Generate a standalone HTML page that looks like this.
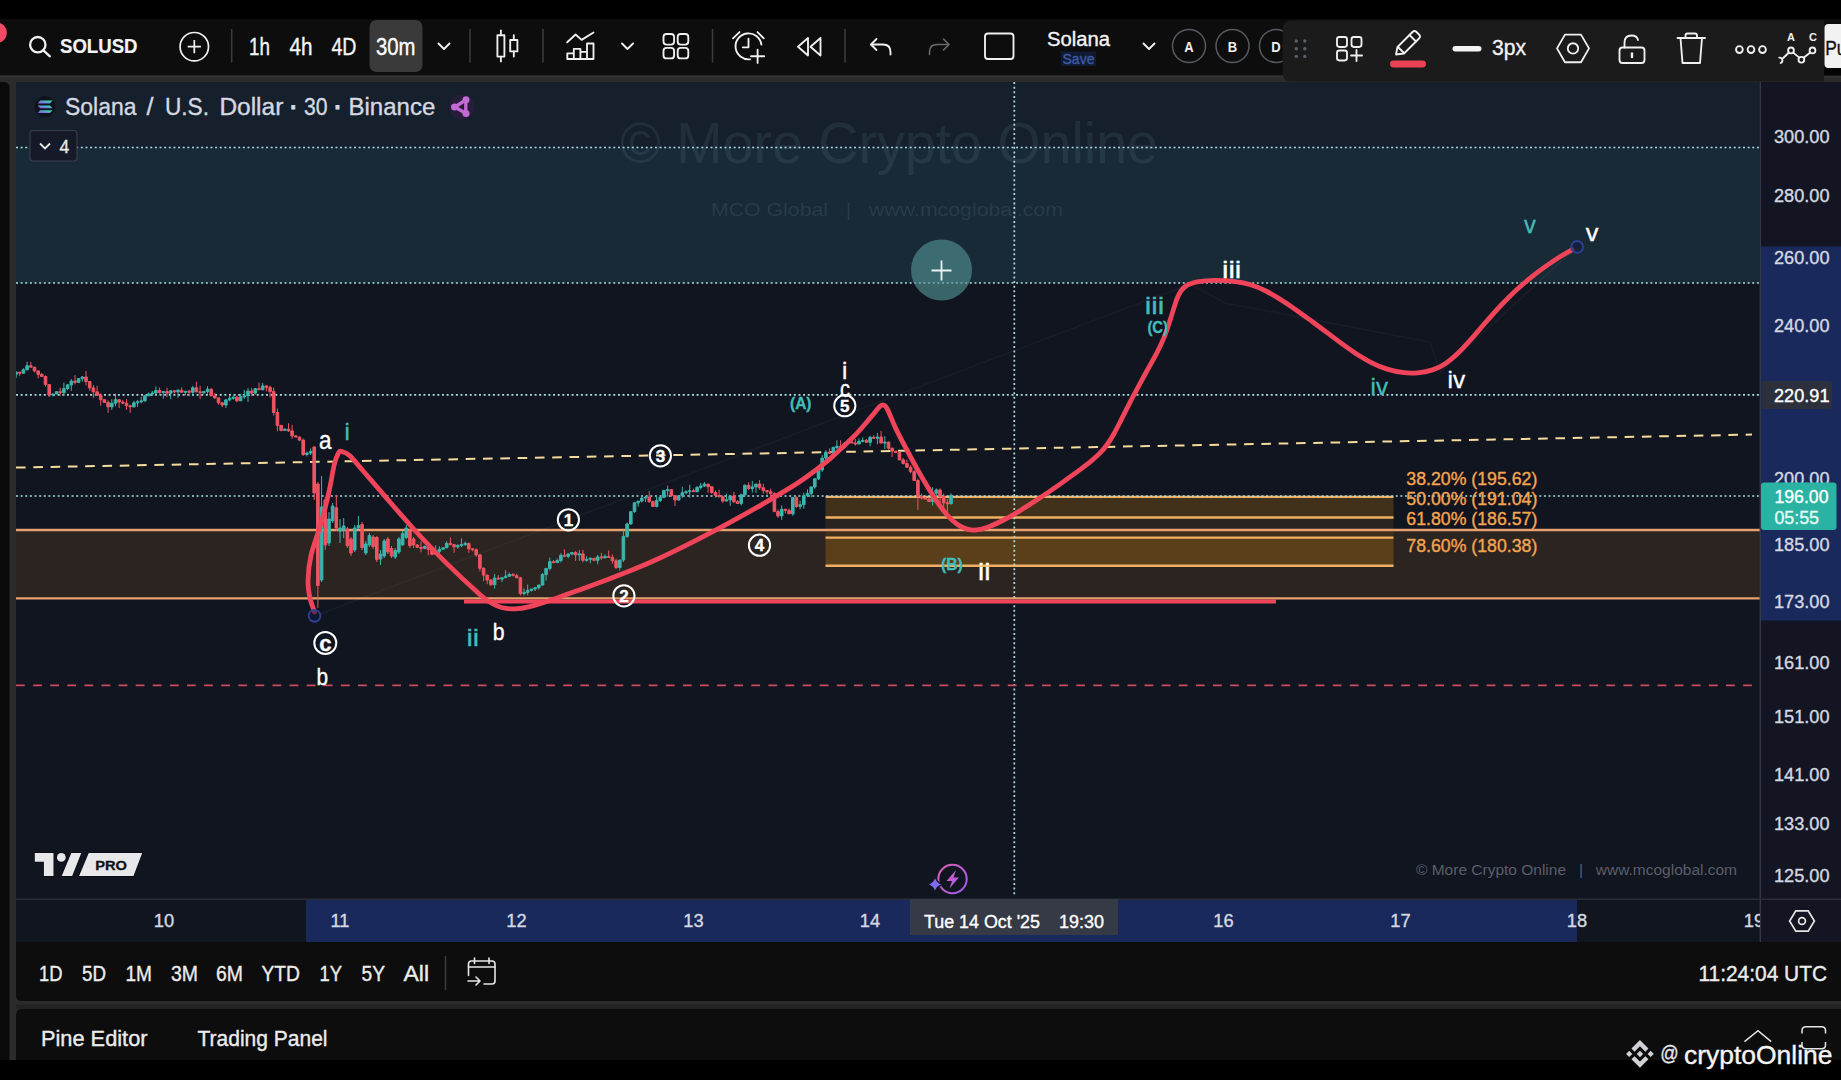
<!DOCTYPE html>
<html lang="en"><head><meta charset="utf-8"><title>SOLUSD 196.00 - Solana chart</title>
<style>
html,body{margin:0;padding:0;background:#000;}
body{width:1841px;height:1080px;overflow:hidden;position:relative;font-family:"Liberation Sans", "DejaVu Sans", sans-serif;}
#app{position:absolute;left:0;top:0;width:1841px;height:1080px;overflow:hidden;background:#000;}
.layer{position:absolute;left:0;top:0;width:1841px;height:1080px;pointer-events:none;}
svg{position:absolute;left:0;top:0;display:block;}
svg text{font-family:"Liberation Sans", "DejaVu Sans", sans-serif;white-space:pre;}
</style></head><body><div id="app">
<div id="frame" class="layer"><svg width="1841" height="1080" viewBox="0 0 1841 1080">
<defs>
<clipPath id="cpChart"><rect x="16" y="82" width="1744" height="817"/></clipPath>
<clipPath id="cpTime"><rect x="16" y="899" width="1744" height="43"/></clipPath>
<linearGradient id="gSol" x1="0" y1="1" x2="1" y2="0"><stop offset="0" stop-color="#9945ff"/><stop offset="1" stop-color="#19fb9b"/></linearGradient>
<linearGradient id="gBolt" x1="0" y1="0" x2="1" y2="1"><stop offset="0" stop-color="#e05fb0"/><stop offset="1" stop-color="#9a5cf0"/></linearGradient>
</defs>

<rect x="0" y="19" width="1841" height="57" fill="#0d0d0d"/>
<rect x="0" y="75.5" width="1841" height="1005" fill="#2b2b2b"/>
<path d="M0 82H4Q9.5 82 9.5 88V1061H0z" fill="#0a0a0a"/>
<rect x="0" y="1060" width="1841" height="20" fill="#000"/>
<path d="M22 82H1841V942H16V88Q16 82 22 82z" fill="#11151f"/>
<path d="M16 942H1841V1001H22Q16 1001 16 995z" fill="#0d0d0d"/>
<path d="M22 1009H1841V1060H16V1015Q16 1009 22 1009z" fill="#0d0d0d"/>
<rect x="16" y="1004.5" width="1841" height="4.5" fill="#232323"/>
<rect x="0" y="75.5" width="1841" height="2" fill="#333333"/>
</svg></div>
<main id="chart-pane" class="layer" aria-label="chart pane"><svg width="1841" height="1080" viewBox="0 0 1841 1080">
<g clip-path="url(#cpChart)">
<rect x="16" y="82" width="1743.5" height="66" fill="#15202c"/>
<rect x="16" y="148" width="1743.5" height="135" fill="#192a37"/>
<text x="620.0" y="162.8" font-size="57" fill="rgba(150,190,205,0.10)" textLength="538.0" lengthAdjust="spacingAndGlyphs">© More Crypto Online</text>
<text x="711.0" y="216.0" font-size="19" fill="rgba(150,190,205,0.13)" textLength="352.0" lengthAdjust="spacingAndGlyphs">MCO Global   |   www.mcoglobal.com</text>
<rect x="16" y="530" width="1744" height="68.3" fill="#2c2420"/>
<rect x="825.5" y="496.7" width="568" height="20.8" fill="#42311a"/>
<rect x="825.5" y="517.5" width="568" height="12.5" fill="#2a2421"/>
<rect x="825.5" y="530" width="568" height="7.7" fill="#3e2e1a"/>
<rect x="825.5" y="537.7" width="568" height="28" fill="#5b3f1a"/>
<line x1="825.5" x2="1393.5" y1="496.9" y2="496.9" stroke="#f0b062" stroke-width="2.4"/>
<line x1="825.5" x2="1393.5" y1="517.5" y2="517.5" stroke="#f0b062" stroke-width="2.4"/>
<line x1="825.5" x2="1393.5" y1="537.6" y2="537.6" stroke="#f0b062" stroke-width="2.4"/>
<line x1="825.5" x2="1393.5" y1="565.8" y2="565.8" stroke="#f0b062" stroke-width="2.4"/>
<line x1="16" x2="1760" y1="530" y2="530" stroke="#e6a06e" stroke-width="2.3"/>
<line x1="16" x2="1760" y1="598.3" y2="598.3" stroke="#e6a06e" stroke-width="2.3"/>
<line x1="16" x2="1759" y1="147.5" y2="147.5" stroke="#a9dbe0" stroke-width="1.7" stroke-dasharray="2 2.63"/>
<line x1="16" x2="1759" y1="283" y2="283" stroke="#a9dbe0" stroke-width="1.7" stroke-dasharray="2 2.63"/>
<line x1="16" x2="1759" y1="394.8" y2="394.8" stroke="#a9dbe0" stroke-width="1.7" stroke-dasharray="2 2.63"/>
<line x1="16" x2="1759" y1="496" y2="496" stroke="#a9dbe0" stroke-width="1.7" stroke-dasharray="2 2.63"/>
<line x1="1014.3" x2="1014.3" y1="82" y2="896" stroke="#a9dbe0" stroke-width="1.7" stroke-dasharray="2 2.63"/>
<line x1="16" y1="467.6" x2="1752" y2="434.6" stroke="#f5dc9c" stroke-width="2" stroke-dasharray="9.6 7.7"/>
<line x1="16" y1="685.3" x2="1752" y2="685.3" stroke="#cc4a62" stroke-width="1.7" stroke-dasharray="8.8 8.3"/>
<polyline points="315,616 1190,284 1225,303 1430,342 1440,372 1577,247" fill="none" stroke="#ffffff" stroke-opacity="0.03" stroke-width="2"/>
<path d="M16.1 371.2V378.2M14.8 372.2h2.6V374.2h-2.6zM23.4 368.3V373.2M22.1 369.8h2.6V373.2h-2.6zM27.1 361.8V370.3M25.8 365.8h2.6V369.8h-2.6zM52.9 393.5V396.5M51.6 394.0h2.6V395.0h-2.6zM56.6 391.2V394.0M55.3 391.7h2.6V394.0h-2.6zM63.9 382.6V395.7M62.6 388.6h2.6V392.7h-2.6zM67.6 383.9V390.1M66.3 384.9h2.6V388.6h-2.6zM71.3 379.1V390.9M70.0 381.1h2.6V384.9h-2.6zM78.6 378.1V382.9M77.3 378.6h2.6V382.4h-2.6zM82.3 376.0V381.6M81.0 377.0h2.6V378.6h-2.6zM111.8 399.2V409.9M110.5 403.2h2.6V406.9h-2.6zM115.5 393.7V406.2M114.2 399.7h2.6V403.2h-2.6zM133.9 400.8V407.8M132.6 402.8h2.6V406.8h-2.6zM137.5 399.8V406.8M136.2 401.8h2.6V402.8h-2.6zM141.2 396.8V403.3M139.9 400.8h2.6V401.8h-2.6zM144.9 394.8V401.8M143.6 395.8h2.6V400.8h-2.6zM148.6 392.5V395.8M147.3 394.0h2.6V395.8h-2.6zM152.3 391.0V396.0M151.0 393.0h2.6V394.0h-2.6zM155.9 386.5V396.0M154.6 390.5h2.6V393.0h-2.6zM163.3 391.6V398.6M162.0 391.6h2.6V392.6h-2.6zM170.7 390.3V399.2M169.4 390.8h2.6V393.2h-2.6zM178.0 388.8V397.9M176.7 390.3h2.6V391.9h-2.6zM185.4 390.8V395.3M184.1 391.3h2.6V392.3h-2.6zM192.8 385.8V395.3M191.5 387.8h2.6V392.3h-2.6zM203.8 391.1V393.8M202.5 391.6h2.6V392.8h-2.6zM207.5 386.2V393.6M206.2 389.2h2.6V391.6h-2.6zM225.9 398.9V408.0M224.6 399.9h2.6V405.0h-2.6zM229.6 395.2V401.4M228.3 398.2h2.6V399.9h-2.6zM233.3 395.7V399.7M232.0 397.2h2.6V398.2h-2.6zM240.6 393.8V400.8M239.3 396.8h2.6V400.8h-2.6zM244.3 389.8V398.8M243.0 395.8h2.6V396.8h-2.6zM248.0 388.1V401.8M246.7 391.1h2.6V395.8h-2.6zM255.3 388.2V394.6M254.0 388.7h2.6V393.1h-2.6zM262.7 382.9V390.2M261.4 385.9h2.6V389.7h-2.6zM284.8 428.3V430.4M283.5 429.3h2.6V430.4h-2.6zM306.9 451.5V456.5M305.6 453.0h2.6V454.5h-2.6zM310.6 448.5V455.0M309.3 451.5h2.6V453.0h-2.6zM321.6 476.0V582.0M320.3 507.0h2.6V580.0h-2.6zM329.0 512.0V546.0M327.7 519.0h2.6V543.0h-2.6zM332.6 503.0V523.0M331.3 506.0h2.6V520.7h-2.6zM340.0 519.0V543.0M338.7 528.0h2.6V531.0h-2.6zM343.7 518.0V538.0M342.4 526.0h2.6V530.0h-2.6zM354.7 525.0V552.0M353.4 528.0h2.6V550.0h-2.6zM358.4 516.0V529.0M357.1 525.5h2.6V528.0h-2.6zM365.8 541.0V555.0M364.5 544.0h2.6V553.0h-2.6zM369.4 533.0V547.0M368.1 535.5h2.6V544.8h-2.6zM380.5 550.0V565.0M379.2 554.0h2.6V559.0h-2.6zM384.2 539.0V558.0M382.9 541.0h2.6V556.0h-2.6zM395.2 548.0V559.0M393.9 550.5h2.6V557.0h-2.6zM398.9 537.0V554.0M397.6 539.0h2.6V552.0h-2.6zM402.6 531.0V546.0M401.3 533.7h2.6V544.8h-2.6zM406.3 525.0V539.0M405.0 528.0h2.6V537.4h-2.6zM424.7 545.5V549.3M423.4 546.5h2.6V548.3h-2.6zM435.7 545.4V554.8M434.4 551.4h2.6V554.3h-2.6zM439.4 546.3V557.4M438.1 549.3h2.6V551.4h-2.6zM443.1 547.3V549.3M441.8 547.8h2.6V549.3h-2.6zM446.7 541.3V547.8M445.4 543.3h2.6V547.8h-2.6zM457.8 544.1V548.8M456.5 545.6h2.6V546.8h-2.6zM461.5 538.5V547.1M460.2 544.5h2.6V545.6h-2.6zM465.2 541.5V546.0M463.9 543.5h2.6V544.5h-2.6zM494.6 574.1V588.7M493.3 578.1h2.6V584.7h-2.6zM502.0 577.8V582.1M500.7 577.8h2.6V579.1h-2.6zM505.6 570.2V577.8M504.3 576.2h2.6V577.8h-2.6zM509.3 572.5V576.7M508.0 574.5h2.6V576.2h-2.6zM524.0 588.4V595.5M522.8 592.4h2.6V593.5h-2.6zM527.7 584.5V595.4M526.4 590.5h2.6V592.4h-2.6zM531.4 589.0V591.5M530.1 589.0h2.6V590.5h-2.6zM535.1 587.2V591.0M533.8 587.7h2.6V589.0h-2.6zM538.8 584.6V589.7M537.5 585.1h2.6V587.7h-2.6zM542.5 573.1V585.6M541.2 574.6h2.6V585.1h-2.6zM546.1 567.9V580.6M544.8 568.4h2.6V574.6h-2.6zM549.8 557.6V570.4M548.5 561.6h2.6V568.4h-2.6zM557.2 558.5V562.6M555.9 560.5h2.6V562.6h-2.6zM560.9 553.3V562.5M559.6 555.3h2.6V560.5h-2.6zM568.2 553.9V558.3M566.9 553.9h2.6V556.3h-2.6zM571.9 552.6V555.4M570.6 552.6h2.6V553.9h-2.6zM579.3 549.9V560.9M578.0 553.9h2.6V554.9h-2.6zM586.6 556.3V561.8M585.3 559.3h2.6V560.3h-2.6zM590.3 557.3V563.3M589.0 558.3h2.6V559.3h-2.6zM597.7 554.9V564.3M596.4 556.9h2.6V560.3h-2.6zM605.0 554.4V557.9M603.7 556.4h2.6V557.9h-2.6zM619.8 560.0V570.5M618.5 560.0h2.6V567.5h-2.6zM623.4 530.4V562.0M622.1 536.4h2.6V560.0h-2.6zM627.1 522.5V537.9M625.8 524.0h2.6V536.4h-2.6zM630.8 511.7V524.5M629.5 511.7h2.6V524.0h-2.6zM634.5 502.3V512.7M633.2 502.8h2.6V511.7h-2.6zM638.2 501.1V506.8M636.9 501.1h2.6V502.8h-2.6zM641.8 496.1V502.6M640.5 498.1h2.6V501.1h-2.6zM645.5 496.1V502.1M644.2 497.1h2.6V498.1h-2.6zM656.6 496.5V507.4M655.3 500.5h2.6V506.4h-2.6zM660.2 497.3V502.0M658.9 497.3h2.6V500.5h-2.6zM663.9 490.6V498.3M662.6 490.6h2.6V497.3h-2.6zM667.6 485.6V496.6M666.3 489.6h2.6V490.6h-2.6zM678.7 495.3V500.5M677.4 495.8h2.6V500.0h-2.6zM682.3 486.7V497.8M681.0 492.7h2.6V495.8h-2.6zM686.0 490.2V494.2M684.7 491.7h2.6V492.7h-2.6zM689.7 484.7V497.7M688.4 490.7h2.6V491.7h-2.6zM697.1 486.0V492.2M695.8 487.5h2.6V491.7h-2.6zM700.7 483.0V489.5M699.4 486.0h2.6V487.5h-2.6zM704.4 482.1V487.0M703.1 484.1h2.6V486.0h-2.6zM726.5 493.8V501.1M725.2 499.8h2.6V501.1h-2.6zM730.2 495.4V505.8M728.9 495.9h2.6V499.8h-2.6zM741.2 493.7V505.4M739.9 494.7h2.6V503.4h-2.6zM744.9 484.3V496.7M743.6 485.3h2.6V494.7h-2.6zM752.3 480.9V492.6M751.0 486.9h2.6V488.6h-2.6zM756.0 484.1V492.9M754.7 484.1h2.6V486.9h-2.6zM781.7 505.3V519.9M780.4 509.3h2.6V515.9h-2.6zM792.8 497.6V515.8M791.5 497.6h2.6V513.8h-2.6zM800.1 500.7V509.4M798.8 504.7h2.6V506.4h-2.6zM803.8 492.7V508.7M802.5 495.7h2.6V504.7h-2.6zM807.5 489.4V497.2M806.2 493.4h2.6V495.7h-2.6zM811.2 486.9V497.4M809.9 486.9h2.6V493.4h-2.6zM814.8 477.9V488.9M813.5 478.9h2.6V486.9h-2.6zM818.5 468.9V479.9M817.2 469.9h2.6V478.9h-2.6zM822.2 455.1V471.9M820.9 458.1h2.6V469.9h-2.6zM825.9 450.2V462.1M824.6 452.2h2.6V458.1h-2.6zM833.3 446.5V453.7M832.0 447.5h2.6V453.2h-2.6zM836.9 440.3V449.0M835.6 446.3h2.6V447.5h-2.6zM844.3 442.0V448.8M843.0 443.5h2.6V447.3h-2.6zM848.0 439.0V444.0M846.7 442.0h2.6V443.5h-2.6zM859.0 438.4V444.0M857.7 441.4h2.6V444.0h-2.6zM862.7 437.4V442.4M861.4 440.4h2.6V441.4h-2.6zM870.1 435.8V446.3M868.8 437.3h2.6V442.3h-2.6zM877.4 433.0V444.3M876.1 437.0h2.6V438.3h-2.6zM884.8 436.1V449.1M883.5 442.1h2.6V443.1h-2.6zM932.6 487.3V505.5M931.3 493.3h2.6V501.5h-2.6zM936.3 488.4V497.3M935.0 489.9h2.6V493.3h-2.6zM951.0 493.3V504.3M949.7 495.3h2.6V503.8h-2.6z" stroke="#3ab5ad" stroke-width="1" fill="#3ab5ad"/>
<path d="M19.8 371.7V376.2M18.5 372.2h2.6V373.2h-2.6zM30.8 361.8V367.2M29.5 365.8h2.6V367.2h-2.6zM34.5 366.7V372.4M33.2 367.2h2.6V370.9h-2.6zM38.2 370.9V378.4M36.9 370.9h2.6V374.4h-2.6zM41.8 372.9V376.5M40.5 374.4h2.6V376.5h-2.6zM45.5 375.5V386.6M44.2 376.5h2.6V384.6h-2.6zM49.2 384.1V397.0M47.9 384.6h2.6V395.0h-2.6zM60.2 387.7V395.7M58.9 391.7h2.6V392.7h-2.6zM75.0 375.1V384.4M73.7 381.1h2.6V382.4h-2.6zM86.0 371.0V385.5M84.7 377.0h2.6V381.5h-2.6zM89.7 381.0V390.9M88.4 381.5h2.6V387.9h-2.6zM93.4 384.9V397.8M92.1 387.9h2.6V391.8h-2.6zM97.1 385.8V395.9M95.8 391.8h2.6V395.4h-2.6zM100.7 393.4V405.7M99.4 395.4h2.6V399.7h-2.6zM104.4 399.2V402.4M103.1 399.7h2.6V402.4h-2.6zM108.1 400.4V412.9M106.8 402.4h2.6V406.9h-2.6zM119.1 399.2V408.1M117.8 399.7h2.6V402.1h-2.6zM122.8 400.1V404.2M121.5 402.1h2.6V403.2h-2.6zM126.5 399.2V409.8M125.2 403.2h2.6V405.8h-2.6zM130.2 404.8V412.8M128.9 405.8h2.6V406.8h-2.6zM159.6 387.5V393.6M158.3 390.5h2.6V392.6h-2.6zM167.0 387.6V397.2M165.7 391.6h2.6V393.2h-2.6zM174.4 390.8V393.4M173.1 390.8h2.6V391.9h-2.6zM181.7 387.3V392.3M180.4 390.3h2.6V392.3h-2.6zM189.1 389.8V396.3M187.8 391.3h2.6V392.3h-2.6zM196.4 381.8V392.3M195.1 387.8h2.6V391.8h-2.6zM200.1 385.8V398.8M198.8 391.8h2.6V392.8h-2.6zM211.2 388.2V395.9M209.9 389.2h2.6V395.9h-2.6zM214.8 392.9V398.9M213.5 395.9h2.6V397.9h-2.6zM218.5 397.9V404.8M217.2 397.9h2.6V402.8h-2.6zM222.2 402.3V407.0M220.9 402.8h2.6V405.0h-2.6zM236.9 395.7V402.3M235.6 397.2h2.6V400.8h-2.6zM251.7 388.1V396.1M250.4 391.1h2.6V393.1h-2.6zM259.0 382.7V389.7M257.7 388.7h2.6V389.7h-2.6zM266.4 385.4V391.4M265.1 385.9h2.6V387.4h-2.6zM270.1 385.9V397.5M268.8 387.4h2.6V391.5h-2.6zM273.7 387.5V415.5M272.4 391.5h2.6V412.5h-2.6zM277.4 408.5V431.4M276.1 412.5h2.6V425.4h-2.6zM281.1 424.9V431.4M279.8 425.4h2.6V430.4h-2.6zM288.5 423.3V431.9M287.2 429.3h2.6V430.9h-2.6zM292.1 424.9V438.9M290.8 430.9h2.6V435.9h-2.6zM295.8 434.9V437.1M294.5 435.9h2.6V437.1h-2.6zM299.5 436.6V441.1M298.2 437.1h2.6V440.1h-2.6zM303.2 438.6V456.0M301.9 440.1h2.6V454.5h-2.6zM314.2 446.0V500.0M312.9 447.0h2.6V493.0h-2.6zM317.9 482.0V607.8M316.6 484.0h2.6V585.5h-2.6zM325.3 497.0V550.0M324.0 500.0h2.6V545.0h-2.6zM336.3 494.8V531.0M335.0 507.8h2.6V528.0h-2.6zM347.4 527.0V548.0M346.1 529.0h2.6V545.7h-2.6zM351.0 537.0V556.0M349.7 539.0h2.6V553.0h-2.6zM362.1 522.0V550.0M360.8 524.4h2.6V547.6h-2.6zM373.1 535.0V549.0M371.8 537.0h2.6V546.5h-2.6zM376.8 536.0V562.0M375.5 537.4h2.6V559.6h-2.6zM387.9 537.0V554.0M386.6 539.0h2.6V552.0h-2.6zM391.5 546.0V558.0M390.2 548.5h2.6V556.0h-2.6zM409.9 529.0V548.0M408.6 531.0h2.6V545.7h-2.6zM413.6 537.0V548.0M412.3 539.0h2.6V545.0h-2.6zM417.3 544.0V547.3M416.0 545.0h2.6V547.3h-2.6zM421.0 541.3V552.3M419.7 547.3h2.6V548.3h-2.6zM428.3 546.5V555.3M427.0 546.5h2.6V549.3h-2.6zM432.0 549.3V555.3M430.7 549.3h2.6V554.3h-2.6zM450.4 537.3V544.7M449.1 543.3h2.6V544.7h-2.6zM454.1 544.2V552.8M452.8 544.7h2.6V546.8h-2.6zM468.8 542.5V552.8M467.5 543.5h2.6V548.8h-2.6zM472.5 548.3V551.3M471.2 548.8h2.6V549.8h-2.6zM476.2 548.3V556.9M474.9 549.8h2.6V554.9h-2.6zM479.9 553.9V571.3M478.6 554.9h2.6V568.3h-2.6zM483.6 567.3V581.1M482.3 568.3h2.6V575.1h-2.6zM487.2 574.6V584.1M485.9 575.1h2.6V580.1h-2.6zM490.9 579.1V586.2M489.6 580.1h2.6V584.7h-2.6zM498.3 575.1V579.6M497.0 578.1h2.6V579.1h-2.6zM513.0 573.0V576.2M511.7 574.5h2.6V575.7h-2.6zM516.7 573.7V577.8M515.4 575.7h2.6V577.8h-2.6zM520.4 576.8V595.5M519.1 577.8h2.6V593.5h-2.6zM553.5 560.1V563.1M552.2 561.6h2.6V562.6h-2.6zM564.5 549.3V557.3M563.2 555.3h2.6V556.3h-2.6zM575.6 551.1V560.9M574.3 552.6h2.6V554.9h-2.6zM582.9 549.9V562.3M581.6 553.9h2.6V560.3h-2.6zM594.0 558.3V561.3M592.7 558.3h2.6V560.3h-2.6zM601.4 552.9V559.9M600.1 556.9h2.6V557.9h-2.6zM608.7 550.4V557.4M607.4 556.4h2.6V557.4h-2.6zM612.4 554.4V563.7M611.1 557.4h2.6V560.7h-2.6zM616.1 558.7V569.0M614.8 560.7h2.6V567.5h-2.6zM649.2 491.1V502.7M647.9 497.1h2.6V501.7h-2.6zM652.9 500.7V506.4M651.6 501.7h2.6V506.4h-2.6zM671.3 489.6V497.0M670.0 489.6h2.6V495.5h-2.6zM675.0 495.5V506.0M673.7 495.5h2.6V500.0h-2.6zM693.4 488.7V491.7M692.1 490.7h2.6V491.7h-2.6zM708.1 484.1V492.7M706.8 484.1h2.6V486.7h-2.6zM711.8 486.2V494.0M710.5 486.7h2.6V492.5h-2.6zM715.5 490.5V497.6M714.2 492.5h2.6V495.6h-2.6zM719.1 489.6V497.3M717.8 495.6h2.6V496.8h-2.6zM722.8 495.3V503.1M721.5 496.8h2.6V501.1h-2.6zM733.9 491.9V503.2M732.6 495.9h2.6V501.7h-2.6zM737.5 500.2V503.9M736.2 501.7h2.6V503.4h-2.6zM748.6 482.3V490.1M747.3 485.3h2.6V488.6h-2.6zM759.6 480.1V489.8M758.3 484.1h2.6V487.8h-2.6zM763.3 483.8V493.6M762.0 487.8h2.6V490.6h-2.6zM767.0 490.1V494.7M765.7 490.6h2.6V491.7h-2.6zM770.7 488.7V497.7M769.4 491.7h2.6V493.7h-2.6zM774.4 492.2V511.6M773.1 493.7h2.6V511.6h-2.6zM778.0 509.6V517.9M776.7 511.6h2.6V515.9h-2.6zM785.4 508.8V513.4M784.1 509.3h2.6V510.4h-2.6zM789.1 508.4V513.8M787.8 510.4h2.6V513.8h-2.6zM796.4 496.6V507.9M795.1 497.6h2.6V506.4h-2.6zM829.6 448.2V453.7M828.3 452.2h2.6V453.2h-2.6zM840.6 440.3V451.3M839.3 446.3h2.6V447.3h-2.6zM851.7 440.5V443.0M850.4 442.0h2.6V443.0h-2.6zM855.3 439.0V445.5M854.0 443.0h2.6V444.0h-2.6zM866.4 438.9V442.8M865.1 440.4h2.6V442.3h-2.6zM873.7 435.3V438.3M872.4 437.3h2.6V438.3h-2.6zM881.1 431.0V443.1M879.8 437.0h2.6V443.1h-2.6zM888.5 441.6V449.7M887.2 442.1h2.6V448.2h-2.6zM892.1 447.7V457.1M890.9 448.2h2.6V451.1h-2.6zM895.8 451.1V452.6M894.5 451.1h2.6V452.6h-2.6zM899.5 451.1V459.9M898.2 452.6h2.6V459.9h-2.6zM903.2 457.9V464.5M901.9 459.9h2.6V463.5h-2.6zM906.9 459.5V467.7M905.6 463.5h2.6V467.2h-2.6zM910.6 465.2V473.2M909.3 467.2h2.6V471.7h-2.6zM914.2 470.2V480.5M912.9 471.7h2.6V480.5h-2.6zM917.9 478.5V510.0M916.6 480.5h2.6V496.5h-2.6zM921.6 493.5V499.6M920.3 496.5h2.6V498.1h-2.6zM925.3 496.6V499.1M924.0 498.1h2.6V499.1h-2.6zM929.0 497.1V501.5M927.7 499.1h2.6V501.5h-2.6zM940.0 488.4V502.5M938.7 489.9h2.6V496.5h-2.6zM943.7 493.5V506.8M942.4 496.5h2.6V502.8h-2.6zM947.4 498.8V514.0M946.1 502.8h2.6V503.8h-2.6z" stroke="#ee5462" stroke-width="1" fill="#ee5462"/>
<line x1="464" x2="1276" y1="601.5" y2="601.5" stroke="#ef4459" stroke-width="4"/>
<path d="M314.5 612.0C313.8 609.7 311.1 603.2 310.0 598.0C308.9 592.8 307.8 587.6 308.0 580.5C308.2 573.4 308.9 564.8 311.0 555.5C313.1 546.2 317.5 535.6 320.5 525.0C323.5 514.4 326.7 501.9 329.0 491.7C331.3 481.5 332.8 470.5 334.4 464.0C336.0 457.5 337.4 454.9 338.6 452.8C339.8 450.7 339.5 450.9 341.4 451.4C343.2 451.9 346.3 452.6 349.7 455.6C353.1 458.6 356.2 462.9 361.9 469.5C367.6 476.0 375.2 485.0 383.8 494.9C392.4 504.8 403.3 517.6 413.7 529.0C424.1 540.4 435.4 552.3 446.4 563.1C457.3 573.9 471.9 587.4 479.3 594.0C486.8 600.6 487.1 600.5 490.8 602.7C494.6 604.9 497.6 606.4 501.6 607.5C505.7 608.5 510.2 609.1 514.9 608.9C519.6 608.8 522.8 608.4 529.6 606.6C536.5 604.9 547.1 601.4 555.8 598.4C564.5 595.5 573.4 592.1 582.1 588.9C590.7 585.7 599.2 582.6 607.8 579.4C616.3 576.2 624.7 573.0 633.3 569.5C641.9 566.0 650.7 562.2 659.4 558.2C668.1 554.2 676.9 549.9 685.5 545.6C694.2 541.3 702.7 537.0 711.3 532.4C719.9 527.9 728.7 523.2 737.3 518.4C746.0 513.6 754.4 508.9 763.1 503.9C771.7 498.9 781.7 493.0 789.1 488.4C796.5 483.8 800.5 481.3 807.5 476.2C814.4 471.2 822.6 465.1 830.7 458.1C838.8 451.1 849.4 440.8 856.1 434.1C862.7 427.3 866.7 422.0 870.7 417.4C874.7 412.8 877.6 408.5 879.8 406.5C882.0 404.5 882.4 404.7 883.7 405.2C885.0 405.7 885.4 405.4 887.6 409.6C889.8 413.8 892.9 422.7 896.7 430.4C900.5 438.1 905.7 447.9 910.1 456.0C914.5 464.2 918.8 472.0 923.1 479.3C927.4 486.6 932.0 494.2 936.0 500.1C940.0 506.1 943.5 510.9 947.1 515.0C950.7 519.0 954.2 522.2 957.5 524.5C960.9 526.9 964.0 528.2 967.2 529.1C970.4 530.0 973.6 530.2 976.9 529.9C980.1 529.7 982.6 529.2 986.9 527.6C991.2 526.0 997.5 523.1 1002.7 520.5C1007.9 517.8 1012.3 515.3 1018.3 511.7C1024.4 508.0 1032.1 503.1 1039.0 498.6C1045.9 494.0 1052.9 489.2 1059.7 484.4C1066.5 479.6 1074.7 473.5 1080.1 469.6C1085.4 465.6 1088.3 463.4 1091.7 460.6C1095.0 457.8 1097.8 455.4 1100.4 452.7C1103.0 450.0 1105.0 447.6 1107.2 444.5C1109.5 441.3 1111.6 437.9 1114.0 433.7C1116.3 429.5 1118.3 425.5 1121.4 419.4C1124.5 413.4 1128.6 404.9 1132.6 397.3C1136.6 389.8 1141.2 381.4 1145.2 374.0C1149.3 366.5 1153.8 358.7 1157.0 352.6C1160.2 346.4 1162.0 342.4 1164.3 336.9C1166.5 331.3 1168.3 325.5 1170.4 319.2C1172.5 312.9 1175.1 303.7 1176.9 298.9C1178.8 294.1 1179.6 292.8 1181.3 290.5C1183.0 288.2 1184.7 286.7 1187.3 285.2C1189.9 283.8 1192.4 282.7 1197.0 281.9C1201.6 281.1 1208.4 280.4 1214.8 280.4C1221.2 280.3 1229.5 280.9 1235.4 281.6C1241.4 282.3 1245.5 283.2 1250.6 284.8C1255.7 286.4 1259.9 287.9 1265.9 291.0C1271.9 294.1 1278.9 298.2 1286.7 303.4C1294.6 308.6 1304.2 315.7 1313.1 322.2C1321.9 328.6 1332.6 336.9 1339.7 342.1C1346.8 347.3 1350.5 349.9 1355.8 353.4C1361.2 356.8 1366.6 360.1 1371.8 362.8C1377.0 365.4 1382.1 367.5 1387.2 369.1C1392.3 370.7 1397.3 371.8 1402.4 372.4C1407.4 373.1 1412.6 373.2 1417.7 372.8C1422.7 372.4 1428.1 371.4 1432.6 369.9C1437.2 368.3 1440.9 366.6 1445.2 363.7C1449.5 360.9 1453.9 357.1 1458.4 352.8C1462.9 348.5 1467.6 343.1 1472.1 338.1C1476.6 333.1 1480.5 328.2 1485.4 322.7C1490.2 317.2 1496.1 310.5 1501.3 305.0C1506.6 299.4 1511.7 294.3 1516.9 289.5C1522.0 284.8 1527.1 280.5 1532.3 276.4C1537.4 272.3 1543.1 268.2 1547.8 264.9C1552.5 261.6 1556.4 259.0 1560.4 256.5C1564.4 254.0 1570.1 250.9 1572.0 249.8" fill="none" stroke="#ef4459" stroke-width="4.8" stroke-linecap="round" stroke-linejoin="round"/>
<circle cx="314.5" cy="615.8" r="5.9" fill="#101a40" fill-opacity="0.55" stroke="#2a4194" stroke-width="1.9"/>
<circle cx="1577.2" cy="246.9" r="5.9" fill="#101a40" fill-opacity="0.55" stroke="#2a4194" stroke-width="1.9"/>
<text x="319.0" y="449.4" font-size="25" fill="#fff" stroke="#fff" stroke-width="0.35" textLength="12.5" lengthAdjust="spacingAndGlyphs">a</text>
<text x="344.5" y="440.3" font-size="24" fill="#43bcbc" stroke="#43bcbc" stroke-width="0.35">i</text>
<text x="316.4" y="684.7" font-size="24" fill="#fff" stroke="#fff" stroke-width="0.35" textLength="11.6" lengthAdjust="spacingAndGlyphs">b</text>
<text x="466.4" y="645.8" font-size="24" fill="#43bcbc" stroke="#43bcbc" stroke-width="0.35" textLength="12.6" lengthAdjust="spacingAndGlyphs">ii</text>
<text x="492.8" y="640.3" font-size="24" fill="#fff" stroke="#fff" stroke-width="0.35" textLength="11.8" lengthAdjust="spacingAndGlyphs">b</text>
<text x="842.0" y="379.0" font-size="24" fill="#fff" stroke="#fff" stroke-width="0.35">i</text>
<text x="840.0" y="396.5" font-size="24" fill="#fff" stroke="#fff" stroke-width="0.35" textLength="10.0" lengthAdjust="spacingAndGlyphs">c</text>
<text x="790.0" y="408.5" font-size="17" fill="#43bcbc" stroke="#43bcbc" stroke-width="0.35" textLength="21.5" lengthAdjust="spacingAndGlyphs" font-weight="bold">(A)</text>
<text x="941.0" y="569.5" font-size="17" fill="#43bcbc" stroke="#43bcbc" stroke-width="0.35" textLength="21.8" lengthAdjust="spacingAndGlyphs" font-weight="bold">(B)</text>
<text x="978.0" y="579.5" font-size="24" fill="#fff" stroke="#fff" stroke-width="0.35" textLength="12.5" lengthAdjust="spacingAndGlyphs">ii</text>
<text x="1144.8" y="313.6" font-size="24" fill="#43bcbc" stroke="#43bcbc" stroke-width="0.35" textLength="19.5" lengthAdjust="spacingAndGlyphs">iii</text>
<text x="1147.4" y="332.5" font-size="17" fill="#43bcbc" stroke="#43bcbc" stroke-width="0.35" textLength="20.6" lengthAdjust="spacingAndGlyphs" font-weight="bold">(C)</text>
<text x="1222.0" y="277.8" font-size="24" fill="#fff" stroke="#fff" stroke-width="0.35" textLength="19.3" lengthAdjust="spacingAndGlyphs">iii</text>
<text x="1370.6" y="395.2" font-size="24" fill="#43bcbc" stroke="#43bcbc" stroke-width="0.35" textLength="17.4" lengthAdjust="spacingAndGlyphs">iv</text>
<text x="1447.6" y="388.2" font-size="24" fill="#fff" stroke="#fff" stroke-width="0.35" textLength="17.6" lengthAdjust="spacingAndGlyphs">iv</text>
<text x="1524.0" y="233.2" font-size="24" fill="#43bcbc" stroke="#43bcbc" stroke-width="0.35" textLength="11.8" lengthAdjust="spacingAndGlyphs">v</text>
<text x="1585.8" y="241.0" font-size="24" fill="#fff" stroke="#fff" stroke-width="0.35" textLength="12.7" lengthAdjust="spacingAndGlyphs">v</text>
<circle cx="568.4" cy="519.8" r="10.6" fill="none" stroke="#fff" stroke-width="2"/><text x="568.4" y="525.9" font-size="17" fill="#fff" stroke="#fff" stroke-width="0.35" font-weight="bold" text-anchor="middle">1</text>
<circle cx="623.9" cy="595.8" r="10.6" fill="none" stroke="#fff" stroke-width="2"/><text x="623.9" y="601.9" font-size="17" fill="#fff" stroke="#fff" stroke-width="0.35" font-weight="bold" text-anchor="middle">2</text>
<circle cx="660.4" cy="455.8" r="10.6" fill="none" stroke="#fff" stroke-width="2"/><text x="660.4" y="461.9" font-size="17" fill="#fff" stroke="#fff" stroke-width="0.35" font-weight="bold" text-anchor="middle">3</text>
<circle cx="759.5" cy="545.2" r="10.6" fill="none" stroke="#fff" stroke-width="2"/><text x="759.5" y="551.3" font-size="17" fill="#fff" stroke="#fff" stroke-width="0.35" font-weight="bold" text-anchor="middle">4</text>
<circle cx="844.8" cy="405.7" r="10.6" fill="none" stroke="#fff" stroke-width="2"/><text x="844.8" y="411.8" font-size="17" fill="#fff" stroke="#fff" stroke-width="0.35" font-weight="bold" text-anchor="middle">5</text>
<circle cx="325.3" cy="643" r="11" fill="none" stroke="#fff" stroke-width="2"/><text x="325.3" y="650.9" font-size="22" fill="#fff" stroke="#fff" stroke-width="0.35" font-weight="bold" text-anchor="middle">c</text>
<text x="1406.3" y="484.5" font-size="17.5" fill="#f4a551" stroke="#f4a551" stroke-width="0.35" textLength="131.0" lengthAdjust="spacingAndGlyphs">38.20% (195.62)</text>
<text x="1406.3" y="504.6" font-size="17.5" fill="#f4a551" stroke="#f4a551" stroke-width="0.35" textLength="131.0" lengthAdjust="spacingAndGlyphs">50.00% (191.04)</text>
<text x="1406.3" y="524.6" font-size="17.5" fill="#f4a551" stroke="#f4a551" stroke-width="0.35" textLength="131.0" lengthAdjust="spacingAndGlyphs">61.80% (186.57)</text>
<text x="1406.3" y="552.2" font-size="17.5" fill="#f4a551" stroke="#f4a551" stroke-width="0.35" textLength="131.0" lengthAdjust="spacingAndGlyphs">78.60% (180.38)</text>
<circle cx="941.5" cy="270" r="30.5" fill="#529496" fill-opacity="0.62"/>
<path d="M931.5 270.5H951.5M941.5 260.5V280.5" stroke="#e8f4f4" stroke-width="1.8" fill="none"/>
<text x="1416.0" y="874.5" font-size="15.5" fill="#5b5e6a" textLength="321.0" lengthAdjust="spacingAndGlyphs">© More Crypto Online   |   www.mcoglobal.com</text>
<g fill="#e8e8ea" stroke="#05070c" stroke-width="1.2" paint-order="stroke"><path d="M34.8 853H53.5V876H43.9V861.7H34.8z"/><circle cx="61.3" cy="857.4" r="4.4"/><path d="M71.3 853H81.3L72.2 876H61.7z"/><path d="M88.7 853H142.2L133.5 876H79.1z"/></g>
<text x="95.2" y="869.7" font-size="13.5" fill="#101218" stroke="#101218" stroke-width="0.3" textLength="31.8" lengthAdjust="spacingAndGlyphs" font-weight="bold">PRO</text>
<circle cx="952.5" cy="879" r="14.2" fill="none" stroke="url(#gBolt)" stroke-width="2"/>
<path d="M956 870L946.5 881H952L949.5 888.5L959 877.5H953.5z" fill="url(#gBolt)"/>
<path d="M935 875Q936 883.5 944 884.5Q936 885.5 935 894Q934 885.5 926 884.5Q934 883.5 935 875z" fill="#7f6af5" stroke="#131623" stroke-width="1.5"/>
<circle cx="45" cy="106.8" r="10.5" fill="#10131c"/>
<g fill="url(#gSol)"><path d="M40.2 100.6H52.5L50 103.4H37.7z"/><path d="M37.7 105.4H50L52.5 108.2H40.2z"/><path d="M40.2 110.2H52.5L50 113H37.7z"/></g>
<text x="65.0" y="115.4" font-size="23.5" fill="#d5d8e0" stroke="#d5d8e0" stroke-width="0.35" textLength="71.5" lengthAdjust="spacingAndGlyphs">Solana</text>
<text x="146.4" y="115.4" font-size="23.5" fill="#d5d8e0" stroke="#d5d8e0" stroke-width="0.35" textLength="7.0" lengthAdjust="spacingAndGlyphs">/</text>
<text x="165.0" y="115.4" font-size="23.5" fill="#d5d8e0" stroke="#d5d8e0" stroke-width="0.35" textLength="44.0" lengthAdjust="spacingAndGlyphs">U.S.</text>
<text x="219.4" y="115.4" font-size="23.5" fill="#d5d8e0" stroke="#d5d8e0" stroke-width="0.35" textLength="63.9" lengthAdjust="spacingAndGlyphs">Dollar</text>
<text x="290.3" y="115.4" font-size="23.5" fill="#d5d8e0" stroke="#d5d8e0" stroke-width="1.0" textLength="7.0" lengthAdjust="spacingAndGlyphs" font-weight="bold">·</text>
<text x="304.0" y="115.4" font-size="23.5" fill="#d5d8e0" stroke="#d5d8e0" stroke-width="0.35" textLength="23.6" lengthAdjust="spacingAndGlyphs">30</text>
<text x="334.6" y="115.4" font-size="23.5" fill="#d5d8e0" stroke="#d5d8e0" stroke-width="1.0" textLength="7.0" lengthAdjust="spacingAndGlyphs" font-weight="bold">·</text>
<text x="348.5" y="115.4" font-size="23.5" fill="#d5d8e0" stroke="#d5d8e0" stroke-width="0.35" textLength="86.8" lengthAdjust="spacingAndGlyphs">Binance</text>
<circle cx="461.7" cy="107" r="12.6" fill="#2c1c3e" fill-opacity="0.8"/>
<g stroke="#c26ad6" stroke-width="3.3" fill="none" stroke-linejoin="round"><path d="M454.8 107L465.8 100L465.8 113.3z"/></g><g fill="#c26ad6"><circle cx="454.5" cy="107" r="3.5"/><circle cx="466" cy="99.8" r="3.5"/><circle cx="466" cy="113.4" r="3.5"/></g>
<rect x="30" y="130.5" width="47" height="30.5" rx="3" fill="#161a28" stroke="#3a3e4c" stroke-width="1.2"/>
<path d="M40 143.5L45 148.5L50 143.5" stroke="#e8e8e8" stroke-width="1.8" fill="none"/>
<text x="59.5" y="153.0" font-size="17.5" fill="#e8e8e8" stroke="#e8e8e8" stroke-width="0.35">4</text>
</g>
</svg></main>
<aside id="price-axis" class="layer" aria-label="price axis"><svg width="1841" height="1080" viewBox="0 0 1841 1080">
<rect x="1760.5" y="82" width="80.5" height="860" fill="#131622"/>
<rect x="1760.5" y="246.5" width="80.5" height="374" fill="#19295c"/>
<line x1="1760.3" x2="1760.3" y1="82" y2="942" stroke="#343848" stroke-width="1.4"/>
<text x="1774.0" y="142.6" font-size="18.3" fill="#d5d8e0" stroke="#d5d8e0" stroke-width="0.35" textLength="55.5" lengthAdjust="spacingAndGlyphs">300.00</text>
<text x="1774.0" y="201.6" font-size="18.3" fill="#d5d8e0" stroke="#d5d8e0" stroke-width="0.35" textLength="55.5" lengthAdjust="spacingAndGlyphs">280.00</text>
<text x="1774.0" y="263.6" font-size="18.3" fill="#d5d8e0" stroke="#d5d8e0" stroke-width="0.35" textLength="55.5" lengthAdjust="spacingAndGlyphs">260.00</text>
<text x="1774.0" y="331.6" font-size="18.3" fill="#d5d8e0" stroke="#d5d8e0" stroke-width="0.35" textLength="55.5" lengthAdjust="spacingAndGlyphs">240.00</text>
<text x="1774.0" y="484.6" font-size="18.3" fill="#d5d8e0" stroke="#d5d8e0" stroke-width="0.35" textLength="55.5" lengthAdjust="spacingAndGlyphs">200.00</text>
<text x="1774.0" y="551.0" font-size="18.3" fill="#d5d8e0" stroke="#d5d8e0" stroke-width="0.35" textLength="55.5" lengthAdjust="spacingAndGlyphs">185.00</text>
<text x="1774.0" y="608.1" font-size="18.3" fill="#d5d8e0" stroke="#d5d8e0" stroke-width="0.35" textLength="55.5" lengthAdjust="spacingAndGlyphs">173.00</text>
<text x="1774.0" y="668.6" font-size="18.3" fill="#d5d8e0" stroke="#d5d8e0" stroke-width="0.35" textLength="55.5" lengthAdjust="spacingAndGlyphs">161.00</text>
<text x="1774.0" y="722.6" font-size="18.3" fill="#d5d8e0" stroke="#d5d8e0" stroke-width="0.35" textLength="55.5" lengthAdjust="spacingAndGlyphs">151.00</text>
<text x="1774.0" y="780.6" font-size="18.3" fill="#d5d8e0" stroke="#d5d8e0" stroke-width="0.35" textLength="55.5" lengthAdjust="spacingAndGlyphs">141.00</text>
<text x="1774.0" y="829.6" font-size="18.3" fill="#d5d8e0" stroke="#d5d8e0" stroke-width="0.35" textLength="55.5" lengthAdjust="spacingAndGlyphs">133.00</text>
<text x="1774.0" y="882.1" font-size="18.3" fill="#d5d8e0" stroke="#d5d8e0" stroke-width="0.35" textLength="55.5" lengthAdjust="spacingAndGlyphs">125.00</text>
<rect x="1761.5" y="381" width="70.5" height="28" rx="3" fill="#2c303c"/>
<text x="1774.0" y="401.6" font-size="18.3" fill="#fff" stroke="#fff" stroke-width="0.35" textLength="55.5" lengthAdjust="spacingAndGlyphs">220.91</text>
<rect x="1761" y="482.5" width="75.5" height="47.5" rx="3" fill="#2ab3a2"/>
<text x="1774.4" y="503.0" font-size="18.3" fill="#fff" stroke="#fff" stroke-width="0.35" textLength="54.1" lengthAdjust="spacingAndGlyphs">196.00</text>
<text x="1774.4" y="523.9" font-size="18.3" fill="#e4fbf6" stroke="#e4fbf6" stroke-width="0.35" textLength="44.6" lengthAdjust="spacingAndGlyphs">05:55</text>
</svg></aside>
<div id="time-axis" class="layer" aria-label="time axis"><svg width="1841" height="1080" viewBox="0 0 1841 1080">
<line x1="16" x2="1841" y1="899.3" y2="899.3" stroke="#2a2e3b" stroke-width="1.4"/>
<rect x="306" y="900" width="1271" height="42" fill="#19295c"/>
<g clip-path="url(#cpTime)">
<text x="164.0" y="927.3" font-size="18.3" fill="#d5d8e0" stroke="#d5d8e0" stroke-width="0.35" text-anchor="middle">10</text>
<text x="340.0" y="927.3" font-size="18.3" fill="#d5d8e0" stroke="#d5d8e0" stroke-width="0.35" text-anchor="middle">11</text>
<text x="516.5" y="927.3" font-size="18.3" fill="#d5d8e0" stroke="#d5d8e0" stroke-width="0.35" text-anchor="middle">12</text>
<text x="693.5" y="927.3" font-size="18.3" fill="#d5d8e0" stroke="#d5d8e0" stroke-width="0.35" text-anchor="middle">13</text>
<text x="870.0" y="927.3" font-size="18.3" fill="#d5d8e0" stroke="#d5d8e0" stroke-width="0.35" text-anchor="middle">14</text>
<text x="1223.5" y="927.3" font-size="18.3" fill="#d5d8e0" stroke="#d5d8e0" stroke-width="0.35" text-anchor="middle">16</text>
<text x="1400.5" y="927.3" font-size="18.3" fill="#d5d8e0" stroke="#d5d8e0" stroke-width="0.35" text-anchor="middle">17</text>
<text x="1577.0" y="927.3" font-size="18.3" fill="#d5d8e0" stroke="#d5d8e0" stroke-width="0.35" text-anchor="middle">18</text>
<text x="1754.0" y="927.3" font-size="18.3" fill="#d5d8e0" stroke="#d5d8e0" stroke-width="0.35" text-anchor="middle">19</text>
</g>
<rect x="910" y="899" width="208" height="36" fill="#363a46"/>
<text x="924.0" y="927.5" font-size="18.3" fill="#fff" stroke="#fff" stroke-width="0.35" textLength="116.0" lengthAdjust="spacingAndGlyphs">Tue 14 Oct '25</text>
<text x="1059.0" y="927.5" font-size="18.3" fill="#fff" stroke="#fff" stroke-width="0.35" textLength="45.0" lengthAdjust="spacingAndGlyphs">19:30</text>
<path d="M1795.8 910.8H1808.2L1814.4 921L1808.2 931.2H1795.8L1789.6 921z" fill="none" stroke="#e6e6e6" stroke-width="1.7"/><circle cx="1802" cy="921" r="3.4" fill="none" stroke="#e6e6e6" stroke-width="1.7"/>
</svg></div>
<nav id="range-toolbar" class="layer" aria-label="range toolbar"><svg width="1841" height="1080" viewBox="0 0 1841 1080">
<text x="39.0" y="981.0" font-size="21.5" fill="#ececec" stroke="#ececec" stroke-width="0.35" textLength="23.5" lengthAdjust="spacingAndGlyphs">1D</text>
<text x="82.0" y="981.0" font-size="21.5" fill="#ececec" stroke="#ececec" stroke-width="0.35" textLength="24.0" lengthAdjust="spacingAndGlyphs">5D</text>
<text x="125.5" y="981.0" font-size="21.5" fill="#ececec" stroke="#ececec" stroke-width="0.35" textLength="26.5" lengthAdjust="spacingAndGlyphs">1M</text>
<text x="171.0" y="981.0" font-size="21.5" fill="#ececec" stroke="#ececec" stroke-width="0.35" textLength="27.0" lengthAdjust="spacingAndGlyphs">3M</text>
<text x="216.0" y="981.0" font-size="21.5" fill="#ececec" stroke="#ececec" stroke-width="0.35" textLength="27.0" lengthAdjust="spacingAndGlyphs">6M</text>
<text x="261.5" y="981.0" font-size="21.5" fill="#ececec" stroke="#ececec" stroke-width="0.35" textLength="38.5" lengthAdjust="spacingAndGlyphs">YTD</text>
<text x="319.5" y="981.0" font-size="21.5" fill="#ececec" stroke="#ececec" stroke-width="0.35" textLength="22.5" lengthAdjust="spacingAndGlyphs">1Y</text>
<text x="361.5" y="981.0" font-size="21.5" fill="#ececec" stroke="#ececec" stroke-width="0.35" textLength="23.5" lengthAdjust="spacingAndGlyphs">5Y</text>
<text x="403.5" y="981.0" font-size="21.5" fill="#ececec" stroke="#ececec" stroke-width="0.35" textLength="25.5" lengthAdjust="spacingAndGlyphs">All</text>
<line x1="445.5" x2="445.5" y1="956" y2="990" stroke="#3c3c3c" stroke-width="1.5"/>
<g fill="none" stroke="#e6e6e6" stroke-width="1.6" stroke-linecap="round" stroke-linejoin="round"><path d="M468.5 975.5V964Q468.5 961 471.5 961H492Q495 961 495 964V981Q495 984 492 984H484"/><path d="M468.5 967H495M474.5 958V963.5M489 958V963.5"/><path d="M468 981H480M476 977L480 981L476 985"/></g>
<text x="1698.5" y="981.0" font-size="21.5" fill="#ececec" stroke="#ececec" stroke-width="0.35" textLength="128.5" lengthAdjust="spacingAndGlyphs">11:24:04 UTC</text>
</svg></nav>
<footer id="bottom-panel" class="layer" aria-label="bottom panel"><svg width="1841" height="1080" viewBox="0 0 1841 1080">
<text x="41.0" y="1046.0" font-size="21.5" fill="#ececec" stroke="#ececec" stroke-width="0.35" textLength="106.5" lengthAdjust="spacingAndGlyphs">Pine Editor</text>
<text x="197.5" y="1046.0" font-size="21.5" fill="#ececec" stroke="#ececec" stroke-width="0.35" textLength="130.0" lengthAdjust="spacingAndGlyphs">Trading Panel</text>
<path d="M1744.5 1041.6L1758 1030.7L1771.2 1041.6" fill="none" stroke="#e6e6e6" stroke-width="1.5"/>
<path d="M1802 1033.5V1030.5Q1802 1026.7 1806 1026.7H1821.5Q1825.5 1026.7 1825.5 1030.5V1033.5M1802 1042V1045Q1802 1048.8 1806 1048.8H1821.5Q1825.5 1048.8 1825.5 1045V1042" fill="none" stroke="#e6e6e6" stroke-width="1.5"/>
</svg></footer>
<div id="channel-watermark" class="layer" aria-label="channel watermark"><svg width="1841" height="1080" viewBox="0 0 1841 1080">
<g fill="#d2d2d6" transform="translate(1626.1 1040.1) scale(0.2188)"><polygon points="38.73 53.2 63.3 28.64 87.88 53.22 102.17 38.92 63.3 0 24.43 38.9"/><polygon points="0 63.31 14.3 49 28.6 63.31 14.3 77.6"/><polygon points="38.73 73.41 63.3 97.98 87.88 73.4 102.18 87.68 63.3 126.61 24.43 87.72"/><polygon points="98.03 63.31 112.33 49.01 126.63 63.31 112.33 77.61"/><polygon points="77.8 63.3 63.3 48.78 48.78 63.3 63.3 77.83"/></g>
<text x="1660.2" y="1060.4" font-size="19.5" fill="#e6e6ea" stroke="#e6e6ea" stroke-width="0.35" textLength="18.4" lengthAdjust="spacingAndGlyphs">@</text>
<text x="1684.0" y="1063.7" font-size="26" fill="#f6f6f6" stroke="#f6f6f6" stroke-width="0.35" textLength="148.5" lengthAdjust="spacingAndGlyphs">cryptoOnline</text>
</svg></div>
<header id="top-toolbar" class="layer" aria-label="top toolbar"><svg width="1841" height="1080" viewBox="0 0 1841 1080">
<circle cx="-3.3" cy="32.7" r="10.2" fill="#ee4a66"/>
<g fill="none" stroke="#f0f0f0" stroke-width="2.3" stroke-linecap="round"><circle cx="37.8" cy="44.7" r="7.7"/><path d="M43.4 50.3L49.9 56.3"/></g>
<text x="60.0" y="53.3" font-size="20.8" fill="#f4f4f4" stroke="#f4f4f4" stroke-width="0.2" textLength="77.5" lengthAdjust="spacingAndGlyphs" font-weight="bold">SOLUSD</text>
<g fill="none" stroke="#f0f0f0" stroke-width="1.7"><circle cx="194.3" cy="46.7" r="14.2"/><path d="M187.7 46.7H200.9M194.3 40.1V53.3"/></g>
<line x1="231.7" x2="231.7" y1="29" y2="62.5" stroke="#3d3d3d" stroke-width="1.5"/>
<line x1="470" x2="470" y1="29" y2="62.5" stroke="#3d3d3d" stroke-width="1.5"/>
<line x1="543" x2="543" y1="29" y2="62.5" stroke="#3d3d3d" stroke-width="1.5"/>
<line x1="712.5" x2="712.5" y1="29" y2="62.5" stroke="#3d3d3d" stroke-width="1.5"/>
<line x1="845" x2="845" y1="29" y2="62.5" stroke="#3d3d3d" stroke-width="1.5"/>
<rect x="369.5" y="20" width="53" height="52" rx="7" fill="#3a3a3a"/>
<text x="249.0" y="54.5" font-size="23" fill="#f4f4f4" stroke="#f4f4f4" stroke-width="0.35" textLength="21.0" lengthAdjust="spacingAndGlyphs">1h</text>
<text x="289.5" y="54.5" font-size="23" fill="#f4f4f4" stroke="#f4f4f4" stroke-width="0.35" textLength="23.0" lengthAdjust="spacingAndGlyphs">4h</text>
<text x="331.5" y="54.5" font-size="23" fill="#f4f4f4" stroke="#f4f4f4" stroke-width="0.35" textLength="25.0" lengthAdjust="spacingAndGlyphs">4D</text>
<text x="376.0" y="54.5" font-size="23" fill="#fff" stroke="#fff" stroke-width="0.35" textLength="39.5" lengthAdjust="spacingAndGlyphs">30m</text>
<g fill="none" stroke="#f0f0f0" stroke-width="1.85" stroke-linecap="round" stroke-linejoin="round"><path d="M438.5 43.5L444 49L449.5 43.5"/><path d="M622 43.5L627.5 49L633 43.5"/><path d="M1143.5 43.5L1149 49L1154.5 43.5"/></g>
<g fill="none" stroke="#f0f0f0" stroke-width="1.85" stroke-linecap="round" stroke-linejoin="round"><rect x="497.4" y="35.2" width="7" height="21.4"/><path d="M500.9 30.4V35.2M500.9 56.6V61.4"/><rect x="510.2" y="40" width="7.2" height="11.4"/><path d="M513.8 35.2V40M513.8 51.4V56.6"/></g>
<g fill="none" stroke="#f0f0f0" stroke-width="1.85" stroke-linecap="round" stroke-linejoin="round"><path d="M567.2 42.3L575.6 34.5L581.6 39.9L593.5 32.5"/><path d="M567.3 59V53.3H573.8V48.9H580.4V51.9H587V43.5H593.5V59zM573.8 53.3V59M580.4 51.9V59M587 51.9V59"/></g>
<g fill="none" stroke="#f0f0f0" stroke-width="1.85" stroke-linecap="round" stroke-linejoin="round"><rect x="663.5" y="34" width="10.6" height="10.6" rx="3"/><rect x="663.5" y="47.8" width="10.6" height="10.6" rx="3"/><rect x="677.7" y="34" width="10.6" height="10.6" rx="3"/><rect x="677.7" y="47.8" width="10.6" height="10.6" rx="3"/></g>
<g fill="none" stroke="#f0f0f0" stroke-width="1.85" stroke-linecap="round" stroke-linejoin="round"><path d="M750 59.3A13 13 0 1 1 761.4 44.6"/><path d="M748.5 38.6V47.3H742.8"/><path d="M733 38.3L739.5 32.1M757.5 32.1L763.7 38.3"/><path d="M751 56.2H764.2M757.6 49.7V62.9"/></g>
<g fill="none" stroke="#f0f0f0" stroke-width="1.85" stroke-linecap="round" stroke-linejoin="round"><path d="M808 38L798 46.8L808 55.5z"/><path d="M820.5 38L810.5 46.8L820.5 55.5z"/></g>
<g fill="none" stroke="#f0f0f0" stroke-width="1.85" stroke-linecap="round" stroke-linejoin="round"><path d="M876.5 39L871 44.5L876.5 50"/><path d="M871.5 44.5H883Q890.5 44.5 890.5 52V54.5"/></g>
<g fill="none" stroke="#6a6a6a" stroke-width="1.6" stroke-linecap="round" stroke-linejoin="round"><path d="M943.5 39L949 44.5L943.5 50"/><path d="M948.5 44.5H937Q929.5 44.5 929.5 52V54.5"/></g>
<rect x="985" y="33.5" width="28.5" height="25.5" rx="3" fill="none" stroke="#f0f0f0" stroke-width="1.85" stroke-linecap="round" stroke-linejoin="round"/>
<text x="1047.0" y="45.5" font-size="20" fill="#f4f4f4" stroke="#f4f4f4" stroke-width="0.35" textLength="63.0" lengthAdjust="spacingAndGlyphs">Solana</text>
<rect x="1061" y="51.5" width="35" height="14.5" fill="#111a33"/>
<text x="1062.5" y="64.0" font-size="14.5" fill="#3f5ba0" stroke="#3f5ba0" stroke-width="0.35" textLength="32.0" lengthAdjust="spacingAndGlyphs">Save</text>
<circle cx="1189" cy="46" r="16.5" fill="none" stroke="#565a60" stroke-width="1.5"/>
<text x="1184.3" y="51.7" font-size="14.5" fill="#f0f0f0" textLength="9.4" lengthAdjust="spacingAndGlyphs" font-weight="bold">A</text>
<circle cx="1232.5" cy="46" r="16.5" fill="none" stroke="#565a60" stroke-width="1.5"/>
<text x="1227.8" y="51.7" font-size="14.5" fill="#f0f0f0" textLength="9.4" lengthAdjust="spacingAndGlyphs" font-weight="bold">B</text>
<circle cx="1276" cy="46" r="16.5" fill="none" stroke="#565a60" stroke-width="1.5"/>
<text x="1271.3" y="51.7" font-size="14.5" fill="#f0f0f0" textLength="9.4" lengthAdjust="spacingAndGlyphs" font-weight="bold">D</text>
</svg></header>
<div id="drawing-toolbar" class="layer" aria-label="drawing toolbar"><svg width="1841" height="1080" viewBox="0 0 1841 1080">
<path d="M1291.5 20.5H1824V81.5H1291.5Q1282.5 81.5 1282.5 72.5V29.5Q1282.5 20.5 1291.5 20.5z" fill="#1b1b1b"/>
<rect x="1824" y="67.5" width="17" height="8" fill="#050505"/>
<g fill="#5a6068"><circle cx="1296.3" cy="41" r="1.7"/><circle cx="1296.3" cy="48.7" r="1.7"/><circle cx="1296.3" cy="56.4" r="1.7"/><circle cx="1304.8" cy="41" r="1.7"/><circle cx="1304.8" cy="48.7" r="1.7"/><circle cx="1304.8" cy="56.4" r="1.7"/></g>
<g fill="none" stroke="#f0f0f0" stroke-width="1.85" stroke-linecap="round" stroke-linejoin="round"><rect x="1337" y="37" width="10" height="10" rx="2.4"/><rect x="1351.5" y="37" width="10" height="10" rx="2.4"/><rect x="1337" y="50.5" width="10" height="10" rx="2.4"/><path d="M1351 55.5H1362M1356.5 50V61"/></g>
<g fill="none" stroke="#f0f0f0" stroke-width="1.85" stroke-linecap="round" stroke-linejoin="round"><path d="M1396 54.5L1397.5 47L1412.5 32Q1414.5 30 1416.5 32L1419 34.5Q1421 36.5 1419 38.5L1404 53.5z"/><path d="M1398 47L1404 53M1409.5 35L1416 41.5"/></g>
<rect x="1390" y="60.6" width="36" height="6.8" rx="3.4" fill="#ea4157"/>
<rect x="1452.5" y="46" width="29" height="5.4" rx="2.7" fill="#f4f4f4"/>
<text x="1492.0" y="55.3" font-size="22" fill="#f4f4f4" stroke="#f4f4f4" stroke-width="0.35" textLength="34.0" lengthAdjust="spacingAndGlyphs">3px</text>
<g fill="none" stroke="#f0f0f0" stroke-width="1.85" stroke-linecap="round" stroke-linejoin="round"><path d="M1565 34.6H1581L1589 48.4L1581 62.2H1565L1557 48.4z"/><circle cx="1573" cy="48.4" r="5.2"/></g>
<g fill="none" stroke="#f0f0f0" stroke-width="1.85" stroke-linecap="round" stroke-linejoin="round"><rect x="1619.5" y="47.5" width="25" height="15.5" rx="3"/><path d="M1624.5 47.5V42.5Q1624.5 35.5 1631.5 35.5Q1637 35.5 1638 40"/><path d="M1632 53.5V57" stroke-width="2.4"/></g>
<g fill="none" stroke="#f0f0f0" stroke-width="1.85" stroke-linecap="round" stroke-linejoin="round"><path d="M1677.5 38H1705M1685.5 38V35.5Q1685.5 33.5 1687.5 33.5H1695Q1697 33.5 1697 35.5V38"/><path d="M1680.5 38L1682.5 63H1700L1702 38"/></g>
<g fill="none" stroke="#f0f0f0" stroke-width="1.85" stroke-linecap="round" stroke-linejoin="round"><circle cx="1739.4" cy="49.6" r="3.4"/><circle cx="1751" cy="49.6" r="3.4"/><circle cx="1762.5" cy="49.6" r="3.4"/></g>
<g fill="none" stroke="#f0f0f0" stroke-width="1.85" stroke-linecap="round" stroke-linejoin="round"><path d="M1783.2 58L1789 52.5M1793.2 52.6L1799.3 57.6M1803.6 57.7L1810.3 52.4"/><circle cx="1791" cy="50.4" r="2.9"/><circle cx="1801.4" cy="59.8" r="2.9"/><circle cx="1812.5" cy="50.4" r="2.9"/><path d="M1779.3 57.6A2.8 2.8 0 0 1 1780.6 63"/></g>
<text x="1791.0" y="41.0" font-size="11" fill="#f0f0f0" font-weight="bold" text-anchor="middle">A</text>
<text x="1813.0" y="41.0" font-size="11" fill="#f0f0f0" font-weight="bold" text-anchor="middle">C</text>
<rect x="1824.5" y="24" width="20" height="44" rx="4" fill="#f2f2f2"/>
<text x="1825.3" y="54.5" font-size="21" fill="#111" stroke="#111" stroke-width="0.35" textLength="21.2" lengthAdjust="spacingAndGlyphs">Pu</text>
</svg></div></div></body></html>
